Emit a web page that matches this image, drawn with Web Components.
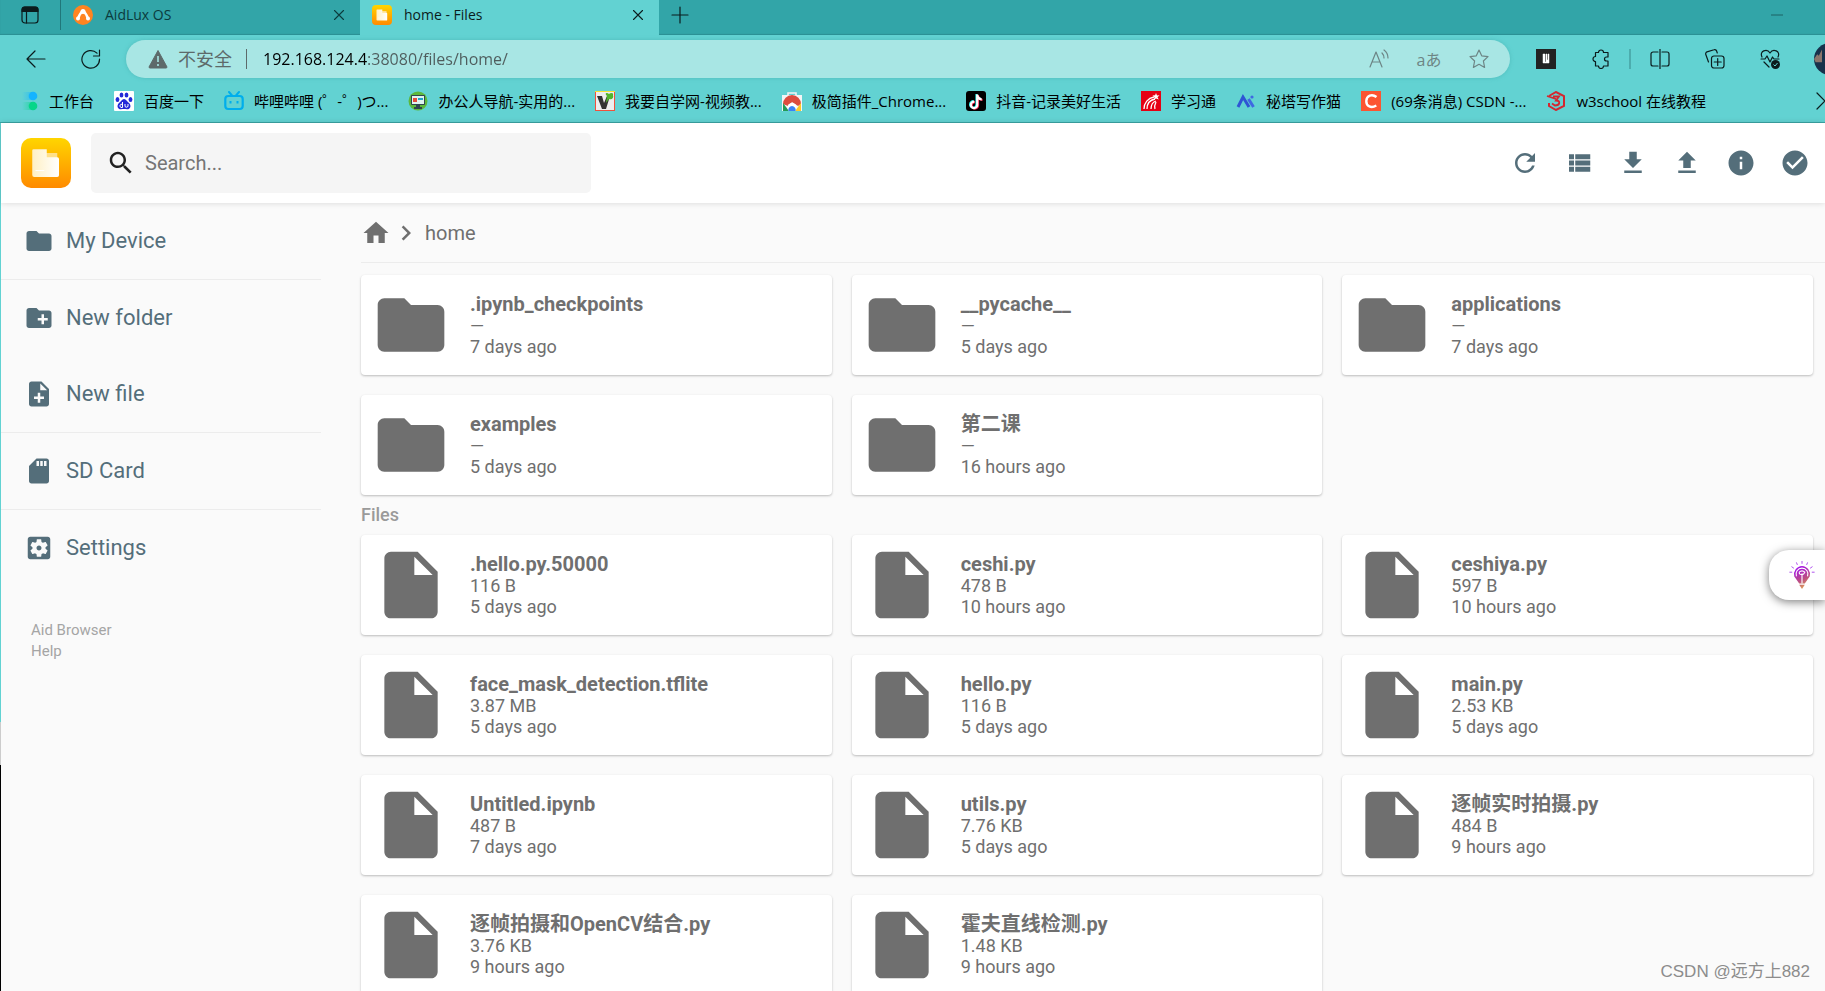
<!DOCTYPE html>
<html lang="en">
<head>
<meta charset="utf-8">
<meta name="viewport" content="width=device-width, initial-scale=1">
<title>home - Files</title>
<style>
    body {
        margin: 0;
        font-family: Roboto, "Noto Sans CJK SC", sans-serif;
        color: #6f6f6f;
        background: #fafafa;
    }
</style>
</head>
<body>
<browser-window>
    <tab-strip slot="tabs">
        <browser-tab icon="aidlux" label="AidLux OS"></browser-tab>
        <browser-tab icon="files" label="home - Files" active></browser-tab>
    </tab-strip>
    <address-bar slot="toolbar"></address-bar>
    <bookmarks-bar slot="bookmarks">
        <book-mark icon="workbench">工作台</book-mark>
        <book-mark icon="baidu">百度一下</book-mark>
        <book-mark icon="bilibili">哔哩哔哩 (゜-゜)つ...</book-mark>
        <book-mark icon="monitor">办公人导航-实用的...</book-mark>
        <book-mark icon="study">我要自学网-视频教...</book-mark>
        <book-mark icon="store">极简插件_Chrome...</book-mark>
        <book-mark icon="douyin">抖音-记录美好生活</book-mark>
        <book-mark icon="chaoxing">学习通</book-mark>
        <book-mark icon="meta">秘塔写作猫</book-mark>
        <book-mark icon="csdn">(69条消息) CSDN -...</book-mark>
        <book-mark icon="w3school">w3school 在线教程</book-mark>
    </bookmarks-bar>
    <files-header></files-header>
    <files-layout>
        <side-nav slot="nav">
            <nav-group>
                <nav-action icon="folder">My Device</nav-action>
            </nav-group>
            <nav-group>
                <nav-action icon="newFolder">New folder</nav-action>
                <nav-action icon="newFile">New file</nav-action>
            </nav-group>
            <nav-group>
                <nav-action icon="sdCard">SD Card</nav-action>
            </nav-group>
            <nav-group>
                <nav-action icon="settings">Settings</nav-action>
            </nav-group>
        </side-nav>
        <bread-crumbs current="home"></bread-crumbs>
        <file-grid>
            <file-item type="folder" name=".ipynb_checkpoints" size="—" modified="7 days ago"></file-item>
            <file-item type="folder" name="__pycache__" size="—" modified="5 days ago"></file-item>
            <file-item type="folder" name="applications" size="—" modified="7 days ago"></file-item>
            <file-item type="folder" name="examples" size="—" modified="5 days ago"></file-item>
            <file-item type="folder" name="第二课" size="—" modified="16 hours ago"></file-item>
        </file-grid>
        <file-grid heading="Files">
            <file-item type="file" name=".hello.py.50000" size="116 B" modified="5 days ago"></file-item>
            <file-item type="file" name="ceshi.py" size="478 B" modified="10 hours ago"></file-item>
            <file-item type="file" name="ceshiya.py" size="597 B" modified="10 hours ago"></file-item>
            <file-item type="file" name="face_mask_detection.tflite" size="3.87 MB" modified="5 days ago"></file-item>
            <file-item type="file" name="hello.py" size="116 B" modified="5 days ago"></file-item>
            <file-item type="file" name="main.py" size="2.53 KB" modified="5 days ago"></file-item>
            <file-item type="file" name="Untitled.ipynb" size="487 B" modified="7 days ago"></file-item>
            <file-item type="file" name="utils.py" size="7.76 KB" modified="5 days ago"></file-item>
            <file-item type="file" name="逐帧实时拍摄.py" size="484 B" modified="9 hours ago"></file-item>
            <file-item type="file" name="逐帧拍摄和OpenCV结合.py" size="3.76 KB" modified="9 hours ago"></file-item>
            <file-item type="file" name="霍夫直线检测.py" size="1.48 KB" modified="9 hours ago"></file-item>
        </file-grid>
    </files-layout>
    <idea-button slot="overlay"></idea-button>
    <water-mark slot="overlay">CSDN @远方上882</water-mark>
</browser-window>

<script>
// 24x24 single colour icons
const GLYPHS = {
    refresh: "M17.65 6.35C16.2 4.9 14.21 4 12 4c-4.42 0-7.99 3.58-7.99 8s3.57 8 7.99 8c3.73 0 6.84-2.55 7.73-6h-2.08c-.82 2.33-3.04 4-5.65 4-3.31 0-6-2.69-6-6s2.69-6 6-6c1.66 0 3.14.69 4.22 1.78L13 11h7V4l-2.35 2.35z",
    viewList: "M4 14h4v-4H4v4zm0 5h4v-4H4v4zM4 9h4V5H4v4zm5 5h12v-4H9v4zm0 5h12v-4H9v4zM9 5v4h12V5H9z",
    download: "M19 9h-4V3H9v6H5l7 7 7-7zM5 18v2h14v-2H5z",
    upload: "M9 16h6v-6h4l-7-7-7 7h4zm-4 2h14v2H5z",
    info: "M12 2C6.48 2 2 6.48 2 12s4.48 10 10 10 10-4.48 10-10S17.52 2 12 2zm1 15h-2v-6h2v6zm0-8h-2V7h2v2z",
    checkCircle: "M12 2C6.48 2 2 6.48 2 12s4.48 10 10 10 10-4.48 10-10S17.52 2 12 2zm-2 15l-5-5 1.41-1.41L10 14.17l7.59-7.59L19 8l-9 9z",
    search: "M15.5 14h-.79l-.28-.27C15.41 12.59 16 11.11 16 9.5 16 5.91 13.09 3 9.5 3S3 5.91 3 9.5 5.91 16 9.5 16c1.61 0 3.09-.59 4.23-1.57l.27.28v.79l5 4.99L20.49 19l-4.99-5zm-6 0C7.01 14 5 11.99 5 9.5S7.01 5 9.5 5 14 7.01 14 9.5 11.99 14 9.5 14z",
    folder: "M10 4H4c-1.1 0-1.99.9-1.99 2L2 18c0 1.1.9 2 2 2h16c1.1 0 2-.9 2-2V8c0-1.1-.9-2-2-2h-8l-2-2z",
    newFolder: "M20 6h-8l-2-2H4c-1.11 0-1.99.89-1.99 2L2 18c0 1.11.89 2 2 2h16c1.11 0 2-.89 2-2V8c0-1.11-.89-2-2-2zm-1 8h-3v3h-2v-3h-3v-2h3V9h2v3h3v2z",
    newFile: "M14 2H6c-1.1 0-1.99.9-1.99 2L4 20c0 1.1.89 2 1.99 2H18c1.1 0 2-.9 2-2V8l-6-6zm2 14h-3v3h-2v-3H8v-2h3v-3h2v3h3v2zm-3-7V3.5L18.5 9H13z",
    sdCard: "M18 2h-8L4.02 8 4 20c0 1.1.9 2 2 2h12c1.1 0 2-.9 2-2V4c0-1.1-.9-2-2-2zm-6 6h-2V4h2v4zm3 0h-2V4h2v4zm3 0h-2V4h2v4z",
    settings: "M12 10c-1.1 0-2 .9-2 2s.9 2 2 2 2-.9 2-2-.9-2-2-2zm7-7H5c-1.11 0-2 .9-2 2v14c0 1.1.89 2 2 2h14c1.11 0 2-.9 2-2V5c0-1.1-.89-2-2-2zm-1.75 9c0 .23-.02.46-.05.68l1.48 1.16c.13.11.17.3.08.45l-1.4 2.42c-.09.15-.27.21-.43.15l-1.74-.7c-.36.28-.76.51-1.18.69l-.26 1.85c-.03.17-.18.3-.35.3h-2.8c-.17 0-.32-.13-.35-.29l-.26-1.85c-.43-.18-.82-.41-1.18-.69l-1.74.7c-.16.06-.34 0-.43-.15l-1.4-2.42c-.09-.15-.05-.34.08-.45l1.48-1.16c-.03-.23-.05-.46-.05-.69 0-.23.02-.46.05-.68l-1.48-1.16c-.13-.11-.17-.3-.08-.45l1.4-2.42c.09-.15.27-.21.43-.15l1.74.7c.36-.28.76-.51 1.18-.69l.26-1.85c.03-.17.18-.3.35-.3h2.8c.17 0 .32.13.35.29l.26 1.85c.43.18.82.41 1.18.69l1.74-.7c.16-.06.34 0 .43.15l1.4 2.42c.09.15.05.34-.08.45l-1.48 1.16c.03.23.05.46.05.69z",
    home: "M10 20v-6h4v6h5v-8h3L12 3 2 12h3v8z",
    chevron: "M10 6L8.59 7.41 13.17 12l-4.58 4.59L10 18l6-6z",
    file: "M6 2c-1.1 0-1.99.9-1.99 2L4 20c0 1.1.89 2 1.99 2H18c1.1 0 2-.9 2-2V8l-6-6H6zm7 7V3.5L18.5 9H13z"
}

// 20x20 drawings: browser controls and site icons
const LINE = `fill="none" stroke="currentColor" stroke-width="1.2" stroke-linecap="round" stroke-linejoin="round"`
const DRAWINGS = {
    workspaces: `<rect x="2" y="2" width="16" height="16" rx="3" ${LINE}/><path d="M1.5 7V4.5a3 3 0 0 1 3-3h11a3 3 0 0 1 3 3V7z" fill="currentColor"/><path d="M6.500 7v11" ${LINE}/>`,
    close: `<path d="M5 5l10 10M15 5L5 15" ${LINE}/>`,
    plus: `<path d="M2 10h16M10 2v16" ${LINE}/>`,
    minimize: `<path d="M4 10h12" fill="none" stroke="currentColor"/>`,
    back: `<path d="M19 10H1M9 2l-8 8 8 8" ${LINE}/>`,
    reload: `<path d="M18.5 10A8.8 8.8 0 1 1 16 4.200M18.5 1v6h-6" ${LINE}/>`,
    warning: `<path d="M10 1.5L19 18a1 1 0 0 1-1 1H2a1 1 0 0 1-1-1z" fill="currentColor" stroke="currentColor" stroke-linejoin="round"/><path d="M10 7v6M10 15v2" stroke="#a8e6e4" stroke-width="1.6"/>`,
    readAloud: `<path d="M1 18L7 3l6 15M3 13h8M13 4q2 2 2 5M15 1q4 3 4 8" ${LINE}/>`,
    star: `<path d="M10 1l2.700 5.800 6.300.8-4.600 4.400 1.200 6.400-5.600-3.100-5.600 3.100 1.200-6.400L1 7.600l6.300-.8z" ${LINE}/>`,
    lExt: `<rect width="20" height="20" fill="#222"/><path d="M7 5h2v8h1V5h1v6h1V5h1v9H7z" fill="#fff" stroke="#fff" stroke-width=".5"/>`,
    puzzle: `<path d="M4.500 3.500h3a2.500 2.500 0 0 1 5 0H17V8h-1.500a2 2 0 0 0 0 4H17v5h-4.500a2.500 2.500 0 0 1-5 0h-3v-4.500a2.500 2.500 0 0 1 0-5z" ${LINE}/>`,
    split: `<path d="M8 3H3a2 2 0 0 0-2 2v10a2 2 0 0 0 2 2h5M12 3h5a2 2 0 0 1 2 2v10a2 2 0 0 1-2 2h-5M10 0v20" ${LINE}/>`,
    collections: `<rect x="6.500" y="7" width="12.500" height="12" rx="2.500" ${LINE}/><path d="M12.700 9.500v7M9.200 13h7M3.500 13L.8 5.500a2 2 0 0 1 1.200-2.600L9 .8a2 2 0 0 1 2.600 1.200l.7 2" ${LINE}/>`,
    heart: `<path d="M2 8C-1 2 7-1 10 4c3-5 11-2 8 4M1 10h4l2-3 3 6 2.500-5 1.500 2h5M4 13l5 5" ${LINE}/><circle cx="15.500" cy="15.500" r="4.500" fill="currentColor"/><path d="M13.500 15.500l1.500 1.500 2.500-3" fill="none" stroke="#62d2d2"/>`,
    avatar: `<circle cx="10" cy="10" r="10" fill="#17324b"/><path d="M0 10l2-3 1 1 2-4v8H1z" fill="#8b756c"/>`,
    more: `<path d="M6 2l8 8-8 8" ${LINE}/>`,
    aidlux: `<circle cx="10" cy="10" r="10" fill="#ff8420"/><path d="M5 13.500Q7 8 10 6q3 2 5 7.500" fill="none" stroke="#fff" stroke-width="2.600" stroke-linecap="round"/><circle cx="10" cy="6.500" r="2.500" fill="#fff"/><circle cx="5" cy="13.500" r="2" fill="#fff"/><circle cx="15" cy="13.500" r="2" fill="#fff"/>`,
    files: `<defs><linearGradient id="g" x2="0" y2="1"><stop stop-color="#ffd500"/><stop offset="1" stop-color="#ff8a00"/></linearGradient><linearGradient id="p"><stop stop-color="#fff0c4"/><stop offset="1" stop-color="#fff"/></linearGradient></defs><rect width="20" height="20" rx="4" fill="url(#g)"/><path d="M10 6h4.500v4H10z" fill="#ffe08a"/><path d="M5 4.500h5.300v3.200h4.200a.7.700 0 0 1 .7.700v6.500a.7.700 0 0 1-.7.700H5.300a.8.800 0 0 1-.8-.8V5a.5.500 0 0 1 .5-.5z" fill="url(#p)"/><path d="M5.800 13h3.500" stroke="#fff" stroke-width=".4"/>`,
    workbench: `<defs><linearGradient id="b"><stop stop-color="#14b4ff" stop-opacity="0"/><stop offset="1" stop-color="#14b4ff" stop-opacity=".6"/></linearGradient><linearGradient id="n"><stop stop-color="#06d689" stop-opacity="0"/><stop offset="1" stop-color="#06d689" stop-opacity=".6"/></linearGradient></defs><path d="M3 1h11v8H3z" fill="url(#b)"/><path d="M3 11h11v8H3z" fill="url(#n)"/><circle cx="14" cy="5" r="4.300" fill="#14b4ff"/><circle cx="14" cy="15" r="4.300" fill="#06d689"/>`,
    baidu: `<rect width="20" height="20" rx="1" fill="#fff"/><g fill="#2329d8"><ellipse cx="3.500" cy="8.500" rx="1.900" ry="2.500"/><ellipse cx="7.500" cy="4" rx="1.900" ry="2.500"/><ellipse cx="12.500" cy="4" rx="1.900" ry="2.500"/><ellipse cx="16.500" cy="8.500" rx="1.900" ry="2.500"/><path d="M10 8c2 0 3 2.500 5 4 3 3 1 6.500-2 6.300-2-.3-4-.3-6 0-3 .2-5-3.300-2-6.300 2-1.500 3-4 5-4z"/></g><path d="M8.500 11v5.500H6.800q-2-1.500 0-3.200h1.700M11 13v2.500q1 1.500 3 0V13" fill="none" stroke="#fff"/>`,
    bilibili: `<path d="M5 1l3 3.500M15 1l-3 3.500" stroke="#00aeec" stroke-width="2" stroke-linecap="round"/><rect x="1.300" y="5" width="17.400" height="13" rx="3" fill="none" stroke="#00aeec" stroke-width="2.200"/><path d="M6.500 10v2.500M13.500 10v2.500" stroke="#00aeec" stroke-width="2"/>`,
    monitor: `<circle cx="10" cy="10" r="9.500" fill="#5cb83c"/><rect x="3" y="4" width="14" height="10" rx="1" fill="#30464e"/><path d="M4 5h12v8H4z" fill="#dff4f0"/><path d="M5 7h4v4H5z" fill="#e64c3c"/><path d="M10 7h5v2h-5z" fill="#20a7c9"/><path d="M8 14h4v2h2v2H6v-2h2z" fill="#30464e"/>`,
    study: `<rect x=".5" y=".5" width="19" height="19" fill="#eee" stroke="#f0523d"/><path d="M0 .5h20" stroke="#f5e332"/><path d="M2 5h5l2 7 3-7h3l-4 13H7z" fill="#333"/><path d="M12 5c-3-3 0-4 2-2 2-2 5-1 4 1 1 3-1 5-4 4l-3 4z" fill="#51b52c"/>`,
    store: `<path d="M6 5V2h8v3" fill="none" stroke="#f3f5f5" stroke-width="1.600"/><path d="M0 4h20v16H0z" fill="#f3f5f5"/><path d="M1 13a9 9 0 0 1 18 0l-3 2-6-4-4 4z" fill="#dd4c3e"/><path d="M1 12l6 8H1z" fill="#239b56"/><path d="M13 20l6-8v8z" fill="#ffc928"/><circle cx="10" cy="16.500" r="4.500" fill="#fff"/><path d="M6.500 20a3.700 3.700 0 1 1 7 0z" fill="#3b83f6"/>`,
    douyin: `<rect width="20" height="20" rx="3" fill="#000"/><g fill="none" stroke-width="2.200"><path d="M10.500 3v10.500a3.200 3.200 0 1 1-3-3.300M10.500 4c.5 2.500 2 3.700 4.500 4" stroke="#25f4ee"/><path d="M12 4v10.500a3.200 3.200 0 1 1-3-3.300M12 5c.5 2.500 2 3.700 4.500 4" stroke="#fe2c55"/><path d="M11.200 3.500V14a3.200 3.200 0 1 1-3-3.300M11.200 4.500c.5 2.500 2 3.700 4.500 4" stroke="#fff"/></g>`,
    chaoxing: `<rect width="20" height="20" fill="#e60013"/><path d="M3 18c0-6 4-11 10-12M6 18c0-5 3-9 8-10M10 18c0-4 2-7 5-8M14 18c-1-3 0-5 1-7" fill="none" stroke="#fff" stroke-width="1.300"/><path d="M15 2l1 2.500 2.500-.2-2 2 1.300 2.200L15 7.500l-2 1.200.5-2.500-2-1.700 2.600-.2z" fill="#fff"/>`,
    meta: `<path d="M2 16L7 6l6 10" fill="none" stroke="#2e55d4" stroke-width="3"/><path d="M12.500 8l5 8" stroke="#3f68e2" stroke-width="3"/><circle cx="16" cy="6" r="1.600" fill="#3f68e2"/>`,
    csdn: `<rect width="20" height="20" fill="#fc5531"/><path d="M15.500 6C11 2.500 5.500 4.500 5.300 10s5 7.500 10 4.500" fill="none" stroke="#fff" stroke-width="2.400"/>`,
    w3school: `<path d="M3 5l7-4 8 4v10l-8 4-7-4v-3" fill="none" stroke="#d5262f" stroke-width="2"/><path d="M1 5l9 3M7 5.500h6l-3 4c5 0 4 5-1 5l-3-2" fill="none" stroke="#d5262f" stroke-width="1.800"/>`,
    bulb: `<defs><linearGradient id="u" x1=".3" x2=".7" y2="1"><stop stop-color="#a30df0"/><stop offset=".6" stop-color="#bc5080"/><stop offset="1" stop-color="#e3ad50"/></linearGradient></defs><path d="M10 3.500a6 6 0 0 1 5.500 7.500L12 16H8l-3.500-5A6 6 0 0 1 10 3.500zM8 17h4l-2 3z" fill="url(#u)"/><path d="M10 9v7M6 11a4.300 4.300 0 1 1 8 0M8 8q2-2 4 0-1 2-2 1.500Q8 10 8 8" fill="none" stroke="#fff" stroke-width=".8"/><path d="M10 0v2M6 1l.7 1.800M14 1l-.7 1.800M2.500 4l1.700 1.200M17.500 4l-1.700 1.200M1 8h2M19 8h-2" stroke="#ae50ee" stroke-width=".7"/>`
}

class UiIcon extends HTMLElement {
    static get observedAttributes () {
        return ["name"]
    }

    constructor () {
        super()
        this.root = this.attachShadow({mode: "open"})
    }

    attributeChangedCallback (_attr, _oldValue, name) {
        const glyph = GLYPHS[name]
        this.root.innerHTML =
        `
        <style>
            :host {
                display: block;
                flex: none;
                width: var(--icon-size, 20px);
                height: var(--icon-size, 20px);
            }

            svg {
                display: block;
                width: 100%;
                height: 100%;
            }
        </style>
        ${glyph
            ? `<svg viewBox="0 0 24 24" fill="currentColor" aria-hidden="true"><path d="${glyph}"/></svg>`
            : `<svg viewBox="0 0 20 20" aria-hidden="true">${DRAWINGS[name]}</svg>`}
        `
    }
}

// Base for elements that draw once from their attributes
class View extends HTMLElement {
    constructor () {
        super()
        this.root = this.attachShadow({mode: "open"})
    }

    connectedCallback () {
        this.root.innerHTML =
        `
        <style>
            * { box-sizing: border-box; }

            button, input {
                margin: 0;
                padding: 0;
                border: 0;
                background: none;
                color: inherit;
                font: inherit;
            }

            button { cursor: pointer; }
            a { color: inherit; text-decoration: none; }
            ${this.styles()}
        </style>
        ${this.markup()}
        `
    }
}

customElements.define("browser-window", class extends View {
    styles () {
        return `
            :host {
                display: flex;
                flex-direction: column;
                position: relative;
                height: 100vh;
                overflow: hidden;
                color: #6f6f6f;
            }

            .chrome {
                flex: none;
                background: #62d2d2;
                border-bottom: 1px solid #3ba5a5;
                color: #0b1c1d;
                font-family: "Open Sans", "Noto Sans CJK SC", sans-serif;
            }

            .page {
                flex: 1;
                display: flex;
                flex-direction: column;
                min-height: 0;
                padding-left: 1px;
                background: linear-gradient(#62d2d2 69%, #ccc 69%, #ccc 74%, #000 74%);
            }
        `
    }

    markup () {
        return `
            <div class="chrome">
                <slot name="tabs"></slot>
                <slot name="toolbar"></slot>
                <slot name="bookmarks"></slot>
            </div>
            <div class="page"><slot></slot></div>
            <slot name="overlay"></slot>
        `
    }
})

customElements.define("tab-strip", class extends View {
    styles () {
        return `
            :host {
                display: flex;
                height: 35px;
                background: #32a5a8;
                box-shadow: inset 0 -1px 1px #2b9093;
            }

            button {
                display: grid;
                place-items: center;
                width: 42px;
                height: 30px;
            }

            .workspaces {
                width: 61px;
                border-right: 1px solid #20777a;
            }

            .minimize { margin-left: auto; width: 96px; color: #1d6264; }
        `
    }

    markup () {
        return `
            <button class="workspaces" aria-label="Workspaces"><ui-icon name="workspaces"></ui-icon></button>
            <slot></slot>
            <button aria-label="New tab"><ui-icon name="plus"></ui-icon></button>
            <button class="minimize" aria-label="Minimize"><ui-icon name="minimize"></ui-icon></button>
        `
    }
})

customElements.define("browser-tab", class extends View {
    styles () {
        return `
            :host {
                display: flex;
                align-items: center;
                gap: 12px;
                flex: 0 1 299px;
                min-width: 0;
                padding: 0 12px 5px;
                box-sizing: border-box;
                color: #0b3b3d;
                font-size: 14px;
                line-height: 20px;
            }

            :host([active]) {
                background: #62d2d2;
                color: #0b1c1d;
            }

            span { flex: 1; white-space: nowrap; }
            button { --icon-size: 18px; }
        `
    }

    markup () {
        const label = this.getAttribute("label")
        return `
            <ui-icon name="${this.getAttribute("icon")}"></ui-icon>
            <span>${label}</span>
            <button aria-label="Close ${label}"><ui-icon name="close"></ui-icon></button>
        `
    }
})

customElements.define("address-bar", class extends View {
    styles () {
        return `
            :host {
                display: flex;
                align-items: center;
                padding: 5px 0 5px 8px;
                overflow: hidden;
            }

            button {
                display: grid;
                place-items: center;
                flex: none;
                width: 55px;
                height: 38px;
            }

            .field {
                display: flex;
                align-items: center;
                flex: 1;
                min-width: 0;
                height: 38px;
                margin: 0 8px;
                padding: 0 6px 0 22px;
                border-radius: 19px;
                background: #a8e6e4;
                color: #5d6a6a;
                box-shadow: 0 0 4px #50bcbc;
            }

            .field button { width: 50px; color: #6d8585; }

            label {
                padding: 0 14px 0 10px;
                border-right: 1px solid #5d6a6a;
                font-size: 18px;
                line-height: 20px;
                white-space: nowrap;
            }

            /* host part is darker than the port and path */
            input {
                flex: 1;
                min-width: 0;
                margin-left: 16px;
                outline: 0;
                font-size: 16px;
                line-height: 24px;
                background: linear-gradient(to right, #000 105px, #4e5c5c 105px);
                background-clip: text;
                -webkit-background-clip: text;
                -webkit-text-fill-color: transparent;
            }

            .translate { font-size: 16px; }

            hr {
                width: 2px;
                height: 20px;
                margin: 0 1px;
                border: 0;
                background: #4cadae;
            }

            .avatar {
                width: 32px;
                margin: 0 -21px 0 17px;
                --icon-size: 32px;
            }
        `
    }

    markup () {
        return `
            <button aria-label="Back"><ui-icon name="back"></ui-icon></button>
            <button aria-label="Reload"><ui-icon name="reload"></ui-icon></button>
            <div class="field">
                <ui-icon name="warning"></ui-icon>
                <label for="url">不安全</label>
                <input id="url" value="192.168.124.4:38080/files/home/" spellcheck="false">
                <button aria-label="Read aloud"><ui-icon name="readAloud"></ui-icon></button>
                <button class="translate">aあ</button>
                <button aria-label="Add to favourites"><ui-icon name="star"></ui-icon></button>
            </div>
            <button aria-label="Extension"><ui-icon name="lExt"></ui-icon></button>
            <button aria-label="Extensions"><ui-icon name="puzzle"></ui-icon></button>
            <hr>
            <button aria-label="Split screen"><ui-icon name="split"></ui-icon></button>
            <button aria-label="Collections"><ui-icon name="collections"></ui-icon></button>
            <button aria-label="Browser essentials"><ui-icon name="heart"></ui-icon></button>
            <button class="avatar" aria-label="Profile"><ui-icon name="avatar"></ui-icon></button>
        `
    }
})

customElements.define("bookmarks-bar", class extends View {
    styles () {
        return `
            :host {
                display: flex;
                align-items: center;
                gap: 20px;
                height: 39px;
                padding: 0 0 4px 19px;
                overflow: hidden;
                box-sizing: border-box;
            }

            button { margin: 0 -6px 0 auto; }
        `
    }

    markup () {
        return `
            <slot></slot>
            <button aria-label="More bookmarks"><ui-icon name="more"></ui-icon></button>
        `
    }
})

customElements.define("book-mark", class extends View {
    styles () {
        return `
            :host { display: block; flex: none; }

            a {
                display: flex;
                align-items: center;
                gap: 10px;
                color: #000;
                font-size: 15px;
                line-height: 20px;
                white-space: nowrap;
            }
        `
    }

    markup () {
        return `<a href="#"><ui-icon name="${this.getAttribute("icon")}"></ui-icon><span><slot></slot></span></a>`
    }
})

customElements.define("files-header", class extends View {
    styles () {
        return `
            :host {
                display: flex;
                align-items: center;
                flex: none;
                height: 80px;
                padding: 0 3px 0 20px;
                box-sizing: border-box;
                background: #fff;
                color: #546e7a;
                box-shadow: 0 0 6px rgba(0, 0, 0, .15);
                position: relative;
                --icon-size: 30px;
            }

            .logo { --icon-size: 50px; }

            label {
                display: flex;
                align-items: center;
                gap: 9px;
                flex: 0 1 500px;
                height: 60px;
                margin: 0 auto 0 20px;
                padding: 0 15px;
                box-sizing: border-box;
                border-radius: 5px;
                background: #f5f5f5;
                color: #212121;
            }

            input {
                flex: 1;
                min-width: 0;
                outline: 0;
                font-size: 20px;
                line-height: 24px;
            }

            input::placeholder { color: #757575; }

            button { padding: 12px; }
        `
    }

    markup () {
        return `
            <ui-icon class="logo" name="files"></ui-icon>
            <label><ui-icon name="search"></ui-icon><input type="text" aria-label="Search" placeholder="Search..."></label>
            <button aria-label="Refresh"><ui-icon name="refresh"></ui-icon></button>
            <button aria-label="Switch view"><ui-icon name="viewList"></ui-icon></button>
            <button aria-label="Download"><ui-icon name="download"></ui-icon></button>
            <button aria-label="Upload"><ui-icon name="upload"></ui-icon></button>
            <button aria-label="Info"><ui-icon name="info"></ui-icon></button>
            <button aria-label="Select multiple"><ui-icon name="checkCircle"></ui-icon></button>
        `
    }
})

customElements.define("files-layout", class extends View {
    styles () {
        return `
            :host {
                display: flex;
                flex: 1;
                gap: 40px;
                min-height: 0;
                overflow: hidden;
                background: #fafafa;
            }

            aside { flex: 0 0 320px; }

            main {
                flex: 1;
                min-width: 0;
                padding-right: 12px;
            }
        `
    }

    markup () {
        return `
            <aside><slot name="nav"></slot></aside>
            <main><slot></slot></main>
        `
    }
})

customElements.define("side-nav", class extends View {
    styles () {
        return `
            :host { display: block; }

            footer {
                margin-top: 34px;
                padding-left: 30px;
                color: #a5a5a5;
                font-size: 15px;
                line-height: 21px;
            }

            a { display: block; }
        `
    }

    markup () {
        return `
            <nav><slot></slot></nav>
            <footer>
                <a href="#">Aid Browser</a>
                <a href="#">Help</a>
            </footer>
        `
    }
})

customElements.define("nav-group", class extends View {
    styles () {
        return `
            :host { display: block; border-top: 1px solid #ececec; }
            :host(:first-child) { border-top: 0; }
        `
    }

    markup () {
        return `<slot></slot>`
    }
})

customElements.define("nav-action", class extends View {
    styles () {
        return `
            :host { display: block; --icon-size: 30px; }

            button {
                display: flex;
                align-items: center;
                gap: 12px;
                width: 100%;
                padding: 23px;
                color: #546e7a;
                font-size: 22px;
                line-height: 30px;
                text-align: left;
            }
        `
    }

    markup () {
        return `<button><ui-icon name="${this.getAttribute("icon")}"></ui-icon><span><slot></slot></span></button>`
    }
})

customElements.define("bread-crumbs", class extends View {
    styles () {
        return `
            :host {
                display: flex;
                align-items: center;
                height: 60px;
                margin-right: -12px;
                border-bottom: 1px solid #ececec;
                box-sizing: border-box;
                font-size: 20px;
                line-height: 24px;
                --icon-size: 30px;
            }

            span { margin-left: 4px; }
        `
    }

    markup () {
        return `
            <a href="#" aria-label="Home"><ui-icon name="home"></ui-icon></a>
            <ui-icon name="chevron"></ui-icon>
            <span><a href="#">${this.getAttribute("current")}</a></span>
        `
    }
})

customElements.define("file-grid", class extends View {
    styles () {
        return `
            :host { display: block; padding-top: 12px; }
            :host([heading]) { padding-top: 9px; }

            h2 {
                margin: 0 0 10px;
                color: #9a9a9a;
                font-size: 18px;
                font-weight: 500;
                line-height: 21px;
            }

            div {
                display: grid;
                grid-template-columns: repeat(3, 1fr);
                gap: 20px;
            }
        `
    }

    markup () {
        const heading = this.getAttribute("heading")
        return `
            ${heading ? `<h2>${heading}</h2>` : ""}
            <div><slot></slot></div>
        `
    }
})

customElements.define("file-item", class extends View {
    styles () {
        return `
            :host { display: block; min-width: 0; --icon-size: 80px; }

            a {
                display: flex;
                align-items: center;
                gap: 19px;
                height: 100px;
                padding: 10px;
                border-radius: 4px;
                background: #fff;
                box-shadow: 0 1px 3px rgba(0, 0, 0, .12), 0 1px 2px rgba(0, 0, 0, .14);
                font-size: 18px;
                line-height: 21px;
                white-space: nowrap;
            }

            p { margin: 0; }

            .name { font-size: 20px; font-weight: 700; }
        `
    }

    markup () {
        return `
            <a href="#">
                <ui-icon name="${this.getAttribute("type")}"></ui-icon>
                <div>
                    <p class="name">${this.getAttribute("name")}</p>
                    <p>${this.getAttribute("size")}</p>
                    <p>${this.getAttribute("modified")}</p>
                </div>
            </a>
        `
    }
})

customElements.define("idea-button", class extends View {
    styles () {
        return `
            :host {
                position: absolute;
                right: 0;
                top: 550px;
                --icon-size: 28px;
            }

            button {
                display: grid;
                place-items: center;
                width: 56px;
                height: 50px;
                padding-left: 10px;
                border-radius: 20px 0 0 20px;
                background: #fff;
                box-shadow: 0 2px 10px rgba(0, 0, 0, .5);
            }
        `
    }

    markup () {
        return `<button aria-label="Ideas"><ui-icon name="bulb"></ui-icon></button>`
    }
})

customElements.define("water-mark", class extends View {
    styles () {
        return `
            :host {
                position: absolute;
                right: 15px;
                bottom: 7px;
                color: #8c8c8c;
                font: 17px/24px "Liberation Sans", "Noto Sans CJK SC", sans-serif;
            }
        `
    }

    markup () {
        return `<slot></slot>`
    }
})

customElements.define("ui-icon", UiIcon)
</script>
</body>
</html>
